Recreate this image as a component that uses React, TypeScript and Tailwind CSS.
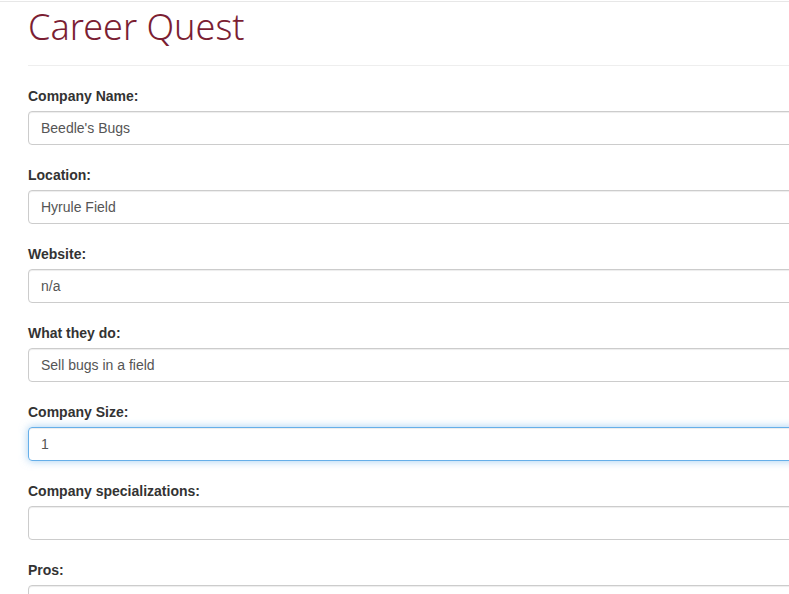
import React from "react";

const fields: { label: string; value: string; focus?: boolean }[] = [
  { label: "Company Name:", value: "Beedle's Bugs" },
  { label: "Location:", value: "Hyrule Field" },
  { label: "Website:", value: "n/a" },
  { label: "What they do:", value: "Sell bugs in a field" },
  { label: "Company Size:", value: "1", focus: true },
  { label: "Company specializations:", value: "" },
  { label: "Pros:", value: "" },
];

export default function App() {
  return (
    <div className="w-[789px] h-[594px] overflow-hidden bg-white font-['Liberation_Sans',Arial,sans-serif] text-[14px] text-[#333]">
      <div className="h-[2px] border-b border-[#e7e7e7]" />
      <div className="pl-[28px] w-[840px]">
        <div className="border-b border-[#eee] h-[64px] pt-[1px]">
          <h1 className="font-['Noto_Sans',sans-serif] font-light text-[36px] leading-[48px] text-[#7b1e33]">
            Career Quest
          </h1>
        </div>
        <div className="pt-[20px]">
          {fields.map((f) => (
            <div key={f.label} className="mb-[20px]">
              <div className="font-bold leading-[20px] mb-[5px]">{f.label}</div>
              <div
                className={
                  "h-[34px] rounded-[4px] border px-[12px] flex items-center text-[#555] " +
                  (f.focus
                    ? "border-[#66afe9] shadow-[inset_0_1px_1px_rgba(0,0,0,0.075),0_0_8px_rgba(102,175,233,0.6)]"
                    : "border-[#ccc] shadow-[inset_0_1px_1px_rgba(0,0,0,0.075)]")
                }
              >
                {f.value}
              </div>
            </div>
          ))}
        </div>
      </div>
    </div>
  );
}
